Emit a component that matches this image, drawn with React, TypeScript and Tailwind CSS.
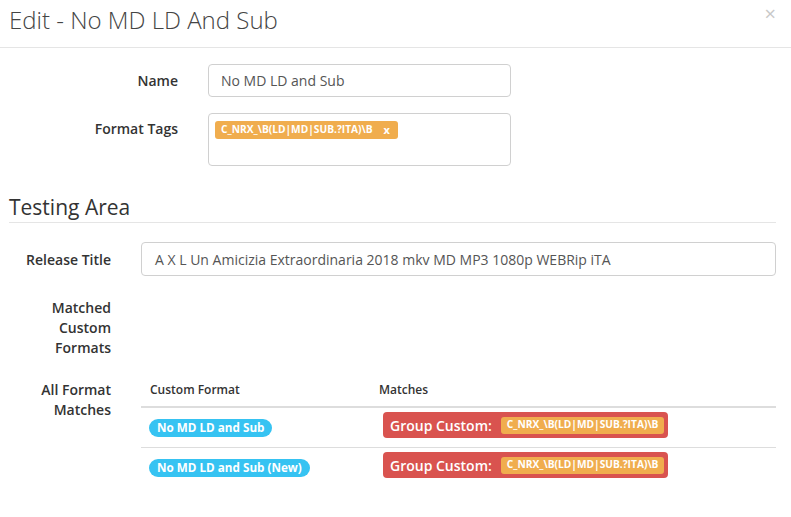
import React from "react";

const TAG = "C_NRX_\\B(LD|MD|SUB.?ITA)\\B";

function GroupLabel() {
  return (
    <div className="ml-[12px] mt-[4px] flex h-[26px] items-center rounded-[4px] bg-[#d9534f] pl-[7px] pr-[4px] text-[14px] font-semibold text-white">
      <span>Group Custom:</span>
      <span className="ml-[9px] flex h-[17px] items-center rounded-[3px] bg-[#f0ad4e] px-[6px] text-[10.2px] font-bold">
        {TAG}
      </span>
    </div>
  );
}

export default function App() {
  return (
    <div className="h-[517px] w-[791px] overflow-hidden bg-white font-['Open_Sans',sans-serif] text-[#333]">
      <div className="flex h-[48px] items-start justify-between border-b border-[#e5e5e5] pl-[9px] pr-[15px]">
        <div className="mt-[4px] text-[24px] font-light leading-[32px] text-[#444]">Edit - No MD LD And Sub</div>
        <div className="mt-[2px] text-[20px] leading-[24px] text-[#c8c8c8]">×</div>
      </div>

      <div className="mt-[16px] flex items-center">
        <div className="w-[178px] text-right text-[14px] font-semibold">Name</div>
        <div className="ml-[30px] flex h-[33px] w-[303px] items-center rounded-[4px] border border-[#d0d0d0] px-[12px] text-[14px] text-[#555]">
          No MD LD and Sub
        </div>
      </div>

      <div className="mt-[16px] flex items-start">
        <div className="mt-[5px] w-[178px] text-right text-[14px] font-semibold">Format Tags</div>
        <div className="ml-[30px] h-[53px] w-[303px] rounded-[4px] border border-[#d0d0d0] pl-[6px] pt-[7px]">
          <div className="flex h-[18px] w-fit items-center rounded-[3px] bg-[#f0ad4e] pl-[6px] pr-[8px] text-[10.2px] font-bold text-white">
            {TAG}
            <span className="ml-[11px] text-[11px]">x</span>
          </div>
        </div>
      </div>

      <div className="ml-[9px] mr-[15px] mt-[26px] border-b border-[#e5e5e5] text-[21px] leading-[30px] text-[#333]">
        Testing Area
      </div>

      <div className="mt-[19px] flex items-center">
        <div className="w-[111px] text-right text-[14px] font-semibold">Release Title</div>
        <div className="ml-[30px] flex h-[34px] w-[635px] items-center rounded-[4px] border border-[#d0d0d0] px-[13px] text-[14px] text-[#555]">
          A X L Un Amicizia Extraordinaria 2018 mkv MD MP3 1080p WEBRip iTA
        </div>
      </div>

      <div className="mt-[22px] flex">
        <div className="w-[111px] text-right text-[14px] font-semibold leading-[20px]">
          Matched
          <br />
          Custom
          <br />
          Formats
        </div>
      </div>

      <div className="mt-[22px] flex items-start">
        <div className="w-[111px] text-right text-[14px] font-semibold leading-[20px]">
          All Format
          <br />
          Matches
        </div>
        <div className="ml-[30px] w-[635px]">
          <div className="flex h-[28px] items-start border-b-2 border-[#ddd] pt-[1px] text-[12px] font-semibold leading-[18px]">
            <div className="w-[238px] pl-[9px]">Custom Format</div>
            <div>Matches</div>
          </div>
          <div className="flex h-[40px] border-b border-[#ddd]">
            <div className="w-[230px] pl-[8px] pt-[11px]">
              <div className="flex h-[18px] w-fit items-center rounded-full bg-[#36c3f2] px-[8px] text-[11.7px] font-bold text-white">
                No MD LD and Sub
              </div>
            </div>
            <GroupLabel />
          </div>
          <div className="flex h-[40px]">
            <div className="w-[230px] pl-[8px] pt-[11px]">
              <div className="flex h-[18px] w-fit items-center rounded-full bg-[#36c3f2] px-[8px] text-[11.7px] font-bold text-white">
                No MD LD and Sub (New)
              </div>
            </div>
            <GroupLabel />
          </div>
        </div>
      </div>
    </div>
  );
}
